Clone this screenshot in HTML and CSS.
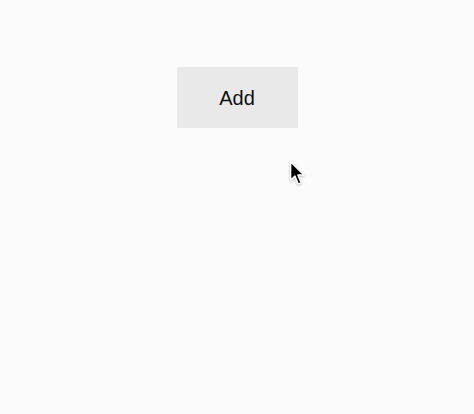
FILE: index.html
```html
<!DOCTYPE html>
<html>
<head>
<meta charset="utf-8">
<link rel="stylesheet" href="styles.css">
</head>
<body>
<main class="page">
  <button class="add-btn">Add</button>
  <svg class="cursor" width="17" height="28" viewBox="0 0 16 26" xmlns="http://www.w3.org/2000/svg">
    <path d="M1.5 1.5 L1.5 19 L5.6 15 L8.6 22.5 L11.4 21.3 L8.4 14 L14 14 Z" fill="#000" stroke="#fff" stroke-width="1.4" stroke-linejoin="round"/>
  </svg>
</main>
</body>
</html>
```

FILE: styles.css
```css
html, body {
  margin: 0;
  padding: 0;
  background: #fbfbfb;
}
.page {
  position: relative;
  width: 474px;
  height: 414px;
  display: flex;
  flex-direction: column;
  align-items: center;
}
.add-btn {
  margin-top: 67px;
  width: 121px;
  height: 61px;
  border: none;
  background: #e9e9e9;
  font-family: "Liberation Sans", Arial, sans-serif;
  font-size: 20px;
  color: #111;
  padding: 2px 0 0;
}
.cursor {
  position: absolute;
  left: 289px;
  top: 160px;
  filter: drop-shadow(0 1px 1px rgba(0,0,0,0.25));
}
```
